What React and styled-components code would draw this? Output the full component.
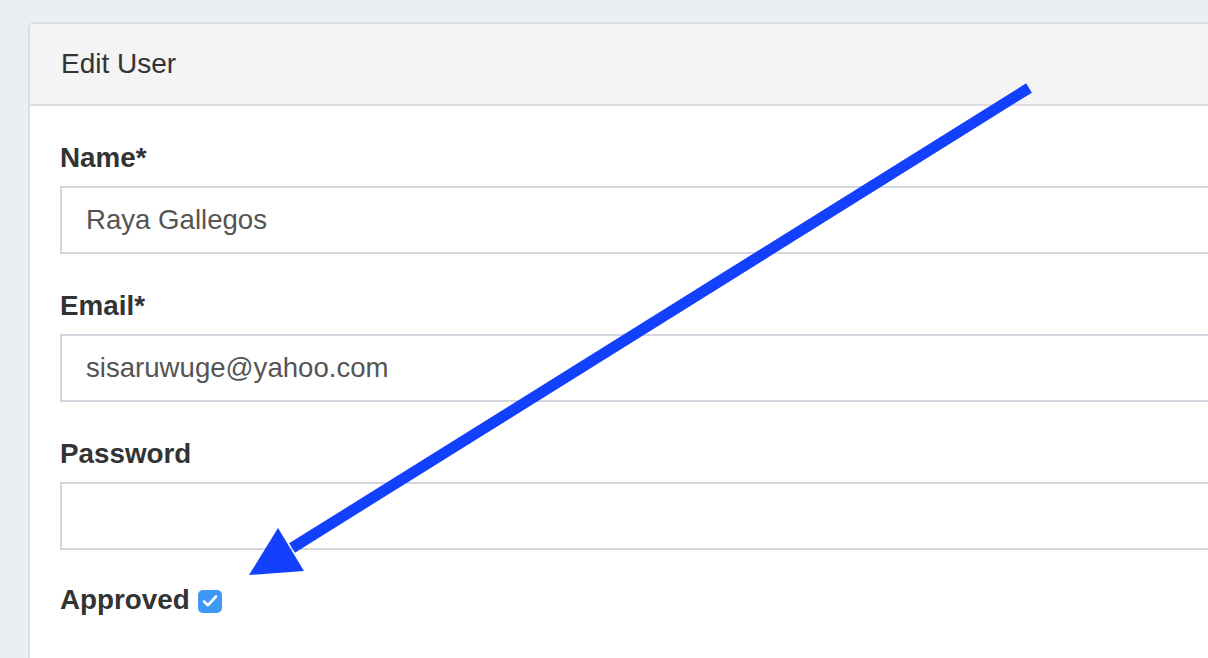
import React from "react";
import styled, { createGlobalStyle } from "styled-components";

const Global = createGlobalStyle`
  html, body { margin: 0; padding: 0; }
  body {
    background: #ebeef2;
    font-family: "Liberation Sans", Arial, Helvetica, sans-serif;
    color: #333;
    overflow: hidden;
    width: 1208px;
    height: 658px;
  }
`;

const Page = styled.div`
  position: relative;
  padding: 22px 0 0 28px;
  height: 658px;
  box-sizing: border-box;
`;

const Panel = styled.section`
  width: 1220px;
  border: 2px solid #dedede;
  border-right: none;
  border-radius: 6px 0 0 0;
  background: #fff;
  overflow: hidden;
`;

const Header = styled.header`
  height: 80px;
  display: flex;
  align-items: center;
  padding-left: 31px;
  background: #f4f4f4;
  border-bottom: 2px solid #dedede;
`;

const Title = styled.h3`
  margin: 0;
  font-size: 28px;
  line-height: 1;
  font-weight: 400;
  color: #333;
`;

const Body = styled.div`
  padding: 36px 0 60px 30px;
  display: flex;
  flex-direction: column;
  gap: 36px;
`;

const Group = styled.div`
  display: flex;
  flex-direction: column;
`;

const Label = styled.label`
  font-size: 27.8px;
  line-height: 32px;
  font-weight: 700;
  color: #333;
  margin-bottom: 12px;
`;

const Input = styled.input`
  box-sizing: border-box;
  height: 68px;
  width: 100%;
  border: 2px solid #d2d6de;
  border-radius: 0;
  padding: 0 24px;
  font-family: "Liberation Sans", Arial, Helvetica, sans-serif;
  font-size: 27.6px;
  color: #555;
  background: #fff;
  outline: none;
`;

const CheckRow = styled.div`
  display: flex;
  align-items: center;
  gap: 8px;
  margin-top: -2px;
`;

const CheckLabel = styled.span`
  font-size: 27.8px;
  line-height: 32px;
  font-weight: 700;
  color: #333;
`;

const CheckBox = styled.span`
  width: 24px;
  height: 23px;
  border-radius: 5px;
  background: #3d99f5;
  display: inline-flex;
  align-items: center;
  justify-content: center;
  margin-top: 2px;
`;

const ArrowLayer = styled.svg`
  position: absolute;
  left: 0;
  top: 0;
  width: 1208px;
  height: 658px;
  pointer-events: none;
`;

function Field({ label, value, type = "text" }) {
  return (
    <Group>
      <Label>{label}</Label>
      <Input type={type} defaultValue={value} readOnly />
    </Group>
  );
}

export default function App() {
  return (
    <>
      <Global />
      <Page>
        <Panel>
          <Header>
            <Title>Edit User</Title>
          </Header>
          <Body>
            <Field label="Name*" value="Raya Gallegos" />
            <Field label="Email*" value="sisaruwuge@yahoo.com" />
            <Field label="Password" value="" type="password" />
            <CheckRow>
              <CheckLabel>Approved</CheckLabel>
              <CheckBox>
                <svg width="18" height="16" viewBox="0 0 18 16">
                  <path
                    d="M3 8.5 L7 12.2 L15 3.5"
                    fill="none"
                    stroke="#fff"
                    strokeWidth="2.6"
                    strokeLinecap="round"
                    strokeLinejoin="round"
                  />
                </svg>
              </CheckBox>
            </CheckRow>
          </Body>
        </Panel>
        <ArrowLayer viewBox="0 0 1208 658">
          <line x1="1029" y1="88" x2="292" y2="548" stroke="#1240fd" strokeWidth="11" />
          <polygon points="249,575 278,528 304,571" fill="#1240fd" />
        </ArrowLayer>
      </Page>
    </>
  );
}
